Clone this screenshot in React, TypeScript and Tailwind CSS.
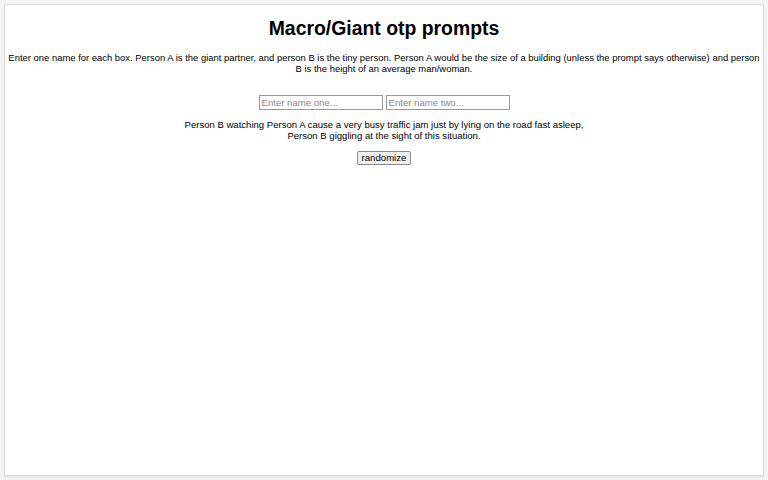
import { useState } from "react";

const prompt =
  "Person B watching Person A cause a very busy traffic jam just by lying on the road fast asleep, Person B giggling at the sight of this situation.";

export default function App() {
  const [one, setOne] = useState("");
  const [two, setTwo] = useState("");

  return (
    <div className="min-h-[480px] bg-[#f3f3f3] p-[4px] font-['Liberation_Sans',Arial,sans-serif] text-black">
      <div className="h-[472px] border border-[#dcdcdc] bg-white text-center shadow-[0_1px_2px_rgba(0,0,0,0.08)]">
        <h1 className="mt-[11px] text-[19.4px] font-bold leading-[25px]">Macro/Giant otp prompts</h1>

        <p className="mt-[11px] text-[9.45px] leading-[11px]">
          Enter one name for each box. Person A is the giant partner, and person B is the tiny person. Person A would be the size of a building (unless the prompt says otherwise) and person B is the height of an average man/woman.
        </p>

        <div className="mt-[21px] flex justify-center gap-[3px]">
          <input
            value={one}
            onChange={(e) => setOne(e.target.value)}
            placeholder="Enter name one..."
            className="h-[15px] w-[124px] border border-[#999] px-[2px] text-[9.6px] leading-none placeholder:text-[#888] outline-none"
          />
          <input
            value={two}
            onChange={(e) => setTwo(e.target.value)}
            placeholder="Enter name two..."
            className="h-[15px] w-[124px] border border-[#999] px-[2px] text-[9.6px] leading-none placeholder:text-[#888] outline-none"
          />
        </div>

        <p className="mx-auto mt-[9px] w-[404px] text-[9.55px] leading-[11px]">{prompt}</p>

        <button className="mt-[10px] h-[14px] rounded-[2px] border border-[#888] bg-[#efefef] px-[4px] text-[9.6px] leading-none">
          randomize
        </button>
      </div>
    </div>
  );
}
